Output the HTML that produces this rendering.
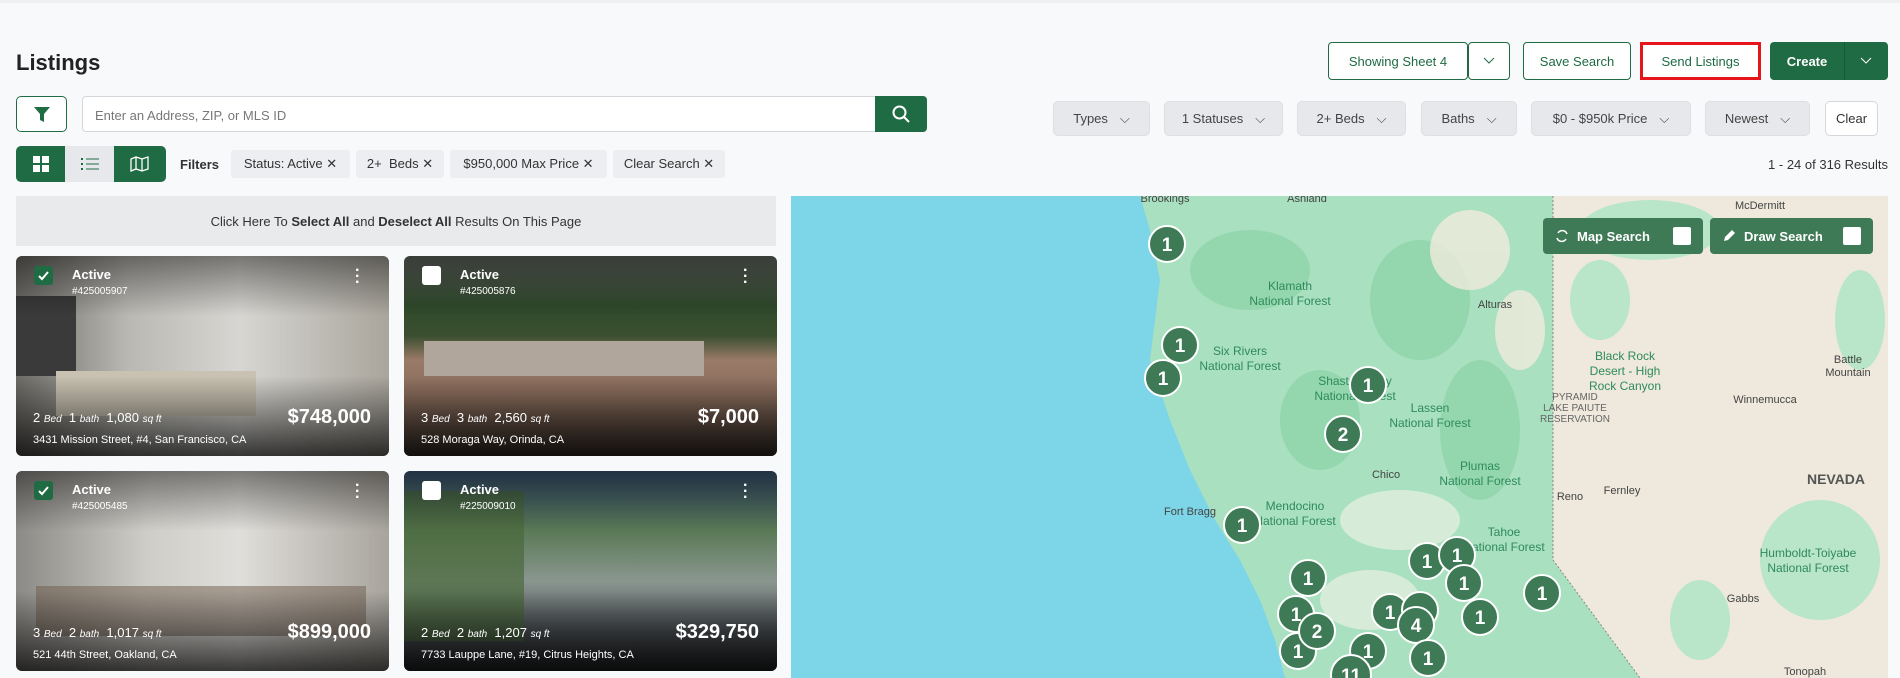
<!DOCTYPE html>
<html><head><meta charset="utf-8"><style>
*{box-sizing:border-box;margin:0;padding:0}
body{width:1900px;height:678px;overflow:hidden;background:#f8f9fb;font-family:"Liberation Sans",sans-serif;position:relative;color:#222}
.a{position:absolute}
.btn{position:absolute;border:1px solid #1f6b43;border-radius:4px;background:#fff;color:#1f6b43;font-size:13px;display:flex;align-items:center;justify-content:center;font-weight:bold}
.pill{position:absolute;top:101px;height:35px;background:#e6e8eb;border-radius:5px;font-size:13px;color:#444;display:flex;align-items:center;justify-content:center;gap:12px;border:1px solid #dde0e3}
.chip{position:absolute;top:150px;height:28px;background:#eceef1;border-radius:3px;font-size:13px;color:#333;display:flex;align-items:center;justify-content:center}
.card{position:absolute;width:373px;height:200px;border-radius:6px;overflow:hidden;color:#fff}
.card .sh{position:absolute;inset:0;background:linear-gradient(rgba(0,0,0,.45),rgba(0,0,0,0) 30%,rgba(0,0,0,0) 60%,rgba(0,0,0,.75))}
.card .st{position:absolute;left:56px;top:11px;font-size:13px;font-weight:bold}
.card .id{position:absolute;left:56px;top:30px;font-size:10px}
.card .cb{position:absolute;left:18px;top:10px;width:19px;height:19px;border-radius:3px;background:#fff}
.card .cb.on{background:#1f6b43}
.card .dots{position:absolute;right:30px;top:12px;font-size:16px;font-weight:bold;line-height:6px;width:4px}
.card .info{position:absolute;left:17px;top:154px;font-size:13px}
.card .info i{font-size:10px}
.card .addr{position:absolute;left:17px;top:178px;font-size:11px}
.card .pr{position:absolute;right:18px;top:150px;font-size:20px;font-weight:bold}
.mk{fill:#3f7a57;stroke:#fff;stroke-width:2}
.mt{fill:#fff;font-size:19px;font-family:"Liberation Sans";text-anchor:middle;font-weight:bold}
.ml{fill:#2e8a5b;font-size:12px;font-family:"Liberation Sans";text-anchor:middle}
</style></head><body>
<div class="a" style="left:0;top:0;width:1900px;height:3px;background:#eef0f2"></div>
<div class="a" style="left:16px;top:50px;font-size:22px;font-weight:bold;color:#222">Listings</div>

<div class="btn" style="left:1328px;top:42px;width:140px;height:38px;font-weight:normal">Showing Sheet 4</div>
<div class="btn" style="left:1468px;top:42px;width:42px;height:38px;font-weight:normal"><svg width="12" height="8"><path d="M1 1l5 5 5-5" stroke="#1f6b43" fill="none"/></svg></div>
<div class="btn" style="left:1523px;top:42px;width:108px;height:38px;font-weight:normal">Save Search</div>
<div class="a" style="left:1640px;top:42px;width:121px;height:38px;border:3px solid #e8141c;background:#fff;color:#1f6b43;font-size:13px;display:flex;align-items:center;justify-content:center">Send Listings</div>
<div class="a" style="left:1770px;top:42px;width:118px;height:38px;background:#1f6b43;border-radius:4px;color:#fff;font-size:13px;font-weight:bold;display:flex;align-items:center"><span style="width:74px;text-align:center">Create</span><span style="width:1px;height:38px;background:#185a38"></span><svg style="margin-left:15px" width="12" height="8"><path d="M1 1l5 5 5-5" stroke="#fff" fill="none"/></svg></div>

<div class="btn" style="left:16px;top:96px;width:51px;height:36px;border-radius:5px"><svg width="18" height="18" viewBox="0 0 18 18"><path d="M1 2h16l-6 7v8l-4-2V9z" fill="#1f6b43"/></svg></div>
<div class="a" style="left:82px;top:96px;width:794px;height:36px;border:1px solid #d4d7db;border-radius:4px 0 0 4px;background:#fff;font-size:13px;color:#777;padding:11px 12px">Enter an Address, ZIP, or MLS ID</div>
<div class="a" style="left:875px;top:96px;width:52px;height:36px;background:#1f6b43;border-radius:0 4px 4px 0;display:flex;align-items:center;justify-content:center"><svg width="18" height="18"><circle cx="7.5" cy="7.5" r="6" stroke="#fff" stroke-width="2" fill="none"/><path d="M12 12l5 5" stroke="#fff" stroke-width="2"/></svg></div>

<div class="pill" style="left:1053px;width:97px">Types <span>⌵</span></div>
<div class="pill" style="left:1164px;width:119px">1 Statuses <span>⌵</span></div>
<div class="pill" style="left:1297px;width:109px">2+ Beds <span>⌵</span></div>
<div class="pill" style="left:1421px;width:96px">Baths <span>⌵</span></div>
<div class="pill" style="left:1531px;width:160px">$0 - $950k Price <span>⌵</span></div>
<div class="pill" style="left:1705px;width:105px">Newest <span>⌵</span></div>
<div class="a" style="left:1825px;top:101px;width:53px;height:35px;border:1px solid #d4d7db;border-radius:5px;background:#fff;font-size:13px;display:flex;align-items:center;justify-content:center;color:#333">Clear</div>

<div class="a" style="left:16px;top:146px;width:150px;height:36px;border-radius:5px;overflow:hidden;display:flex">
<div style="width:49px;background:#1f6b43;display:flex;align-items:center;justify-content:center"><svg width="16" height="16"><rect x="0" y="0" width="7" height="7" fill="#fff"/><rect x="9" y="0" width="7" height="7" fill="#fff"/><rect x="0" y="9" width="7" height="7" fill="#fff"/><rect x="9" y="9" width="7" height="7" fill="#fff"/></svg></div>
<div style="width:49px;background:#e6e8eb;display:flex;align-items:center;justify-content:center"><svg width="18" height="14"><g fill="#1f6b43"><rect x="0" y="1" width="2" height="2"/><rect x="0" y="6" width="2" height="2"/><rect x="0" y="11" width="2" height="2"/><rect x="5" y="1.5" width="13" height="1"/><rect x="5" y="6.5" width="13" height="1"/><rect x="5" y="11.5" width="13" height="1"/></g></svg></div>
<div style="width:52px;background:#1f6b43;display:flex;align-items:center;justify-content:center"><svg width="20" height="16"><path d="M1 3l5-2 6 2 6-2v12l-6 2-6-2-5 2z M6 1v12 M12 3v12" stroke="#fff" fill="none" stroke-width="1.3"/></svg></div>
</div>
<div class="a" style="left:180px;top:157px;font-size:13px;font-weight:bold;color:#333">Filters</div>
<div class="chip" style="left:231px;width:119px">Status: Active&nbsp;✕</div>
<div class="chip" style="left:356px;width:88px">2+&nbsp; Beds&nbsp;✕</div>
<div class="chip" style="left:450px;width:157px">$950,000 Max Price&nbsp;✕</div>
<div class="chip" style="left:613px;width:112px">Clear Search&nbsp;✕</div>
<div class="a" style="right:12px;top:157px;font-size:13px;color:#333">1 - 24 of 316 Results</div>

<div class="a" style="left:16px;top:196px;width:760px;height:50px;background:#e8eaec;font-size:13px;color:#333;display:flex;align-items:center;justify-content:center">Click Here To&nbsp;<b>Select All</b>&nbsp;and&nbsp;<b>Deselect All</b>&nbsp;Results On This Page</div>

<div class="card" style="left:16px;top:256px;background:linear-gradient(90deg,#6d6b66,#b9b8b3 30%,#d7d6d2 60%,#a9a59c);">
<div class="a" style="left:0;top:40px;width:60px;height:80px;background:#3a3a3a"></div>
<div class="a" style="left:40px;top:115px;width:200px;height:45px;background:#c9c2b2"></div>
<div class="sh"></div><div class="cb on"><svg width="19" height="19"><path d="M5 10l3 3 6-7" stroke="#fff" stroke-width="2" fill="none"/></svg></div><div class="st">Active</div><div class="id">#425005907</div><div class="dots">·<br>·<br>·</div>
<div class="info">2 <i>Bed</i>&nbsp; 1 <i>bath</i>&nbsp; 1,080 <i>sq ft</i></div><div class="addr">3431 Mission Street, #4, San Francisco, CA</div><div class="pr">$748,000</div></div>

<div class="card" style="left:404px;top:256px;background:linear-gradient(#6a6f6a,#2f4a2a 25%,#3b4f30 40%,#9a7a68 52%,#8a6d5c 70%,#4a3e36);">
<div class="a" style="left:20px;top:85px;width:280px;height:35px;background:#b0a69c"></div>
<div class="sh"></div><div class="cb"></div><div class="st">Active</div><div class="id">#425005876</div><div class="dots">·<br>·<br>·</div>
<div class="info">3 <i>Bed</i>&nbsp; 3 <i>bath</i>&nbsp; 2,560 <i>sq ft</i></div><div class="addr">528 Moraga Way, Orinda, CA</div><div class="pr">$7,000</div></div>

<div class="card" style="left:16px;top:471px;background:linear-gradient(90deg,#8c8a86,#cfcdc8 35%,#e0deda 60%,#a8a49d);">
<div class="a" style="left:20px;top:115px;width:330px;height:50px;background:#6b5a4a;opacity:.5"></div>
<div class="sh"></div><div class="cb on"><svg width="19" height="19"><path d="M5 10l3 3 6-7" stroke="#fff" stroke-width="2" fill="none"/></svg></div><div class="st">Active</div><div class="id">#425005485</div><div class="dots">·<br>·<br>·</div>
<div class="info">3 <i>Bed</i>&nbsp; 2 <i>bath</i>&nbsp; 1,017 <i>sq ft</i></div><div class="addr">521 44th Street, Oakland, CA</div><div class="pr">$899,000</div></div>

<div class="card" style="left:404px;top:471px;background:linear-gradient(#3d5a78,#5a7a55 30%,#8a9690 55%,#4e5358 80%,#2c2e30);">
<div class="a" style="left:0;top:20px;width:120px;height:150px;background:#4a6a3c;opacity:.7"></div>
<div class="sh"></div><div class="cb"></div><div class="st">Active</div><div class="id">#225009010</div><div class="dots">·<br>·<br>·</div>
<div class="info">2 <i>Bed</i>&nbsp; 2 <i>bath</i>&nbsp; 1,207 <i>sq ft</i></div><div class="addr">7733 Lauppe Lane, #19, Citrus Heights, CA</div><div class="pr">$329,750</div></div>

<svg class="a" style="left:791px;top:196px" width="1097" height="482" viewBox="791 196 1097 482">
<rect x="791" y="196" width="1097" height="482" fill="#7dd5e8"/>
<path d="M1140 196 L1150 230 L1160 280 L1150 360 L1170 420 L1190 470 L1215 520 L1240 560 L1260 600 L1275 640 L1285 678 L1888 678 L1888 196Z" fill="#a9e0c0"/>
<path d="M1553 196 L1553 560 L1640 678 L1888 678 L1888 196Z" fill="#eee9dc"/>
<g fill="#b9e6c8"><ellipse cx="1650" cy="230" rx="70" ry="30"/><ellipse cx="1600" cy="300" rx="30" ry="40"/><ellipse cx="1860" cy="320" rx="25" ry="50"/><ellipse cx="1820" cy="560" rx="60" ry="60"/><ellipse cx="1700" cy="620" rx="30" ry="40"/></g>
<g fill="#8fd4aa" opacity=".8"><ellipse cx="1250" cy="270" rx="60" ry="40"/><ellipse cx="1420" cy="300" rx="50" ry="60"/><ellipse cx="1480" cy="430" rx="40" ry="70"/><ellipse cx="1320" cy="420" rx="40" ry="50"/></g>
<g fill="#f0ebdc" opacity=".8"><ellipse cx="1470" cy="250" rx="40" ry="40"/><ellipse cx="1520" cy="330" rx="25" ry="40"/></g>
<g fill="#d7ecd8"><ellipse cx="1400" cy="520" rx="60" ry="30"/><ellipse cx="1370" cy="600" rx="50" ry="30"/></g>
<path d="M1553 196 V560 L1640 678" stroke="#888" stroke-dasharray="2 2" fill="none"/>
<text class="ml" x="1290" y="290">Klamath</text><text class="ml" x="1290" y="305">National Forest</text>
<text class="ml" x="1240" y="355">Six Rivers</text><text class="ml" x="1240" y="370">National Forest</text>
<text class="ml" x="1355" y="385">Shasta-Trinity</text><text class="ml" x="1355" y="400">National Forest</text>
<text class="ml" x="1430" y="412">Lassen</text><text class="ml" x="1430" y="427">National Forest</text>
<text class="ml" x="1480" y="470">Plumas</text><text class="ml" x="1480" y="485">National Forest</text>
<text class="ml" x="1295" y="510">Mendocino</text><text class="ml" x="1295" y="525">National Forest</text>
<text class="ml" x="1504" y="536">Tahoe</text><text class="ml" x="1504" y="551">National Forest</text>
<text class="ml" x="1625" y="360">Black Rock</text><text class="ml" x="1625" y="375">Desert - High</text>
<text class="ml" x="1625" y="390">Rock Canyon</text>
<text class="ml" x="1808" y="557">Humboldt-Toiyabe</text><text class="ml" x="1808" y="572">National Forest</text>
<g font-family="Liberation Sans" font-size="11" fill="#444" text-anchor="middle"><text x="1165" y="202">Brookings</text><text x="1307" y="202">Ashland</text><text x="1760" y="209">McDermitt</text><text x="1495" y="308">Alturas</text><text x="1765" y="403">Winnemucca</text><text x="1848" y="363">Battle</text><text x="1848" y="376">Mountain</text><text x="1570" y="500">Reno</text><text x="1622" y="494">Fernley</text><text x="1386" y="478">Chico</text><text x="1190" y="515">Fort Bragg</text><text x="1743" y="602">Gabbs</text><text x="1805" y="675">Tonopah</text><text x="1836" y="484" font-size="14" font-weight="bold" fill="#555">NEVADA</text><text x="1575" y="400" font-size="10" fill="#666">PYRAMID</text><text x="1575" y="411" font-size="10" fill="#666">LAKE PAIUTE</text><text x="1575" y="422" font-size="10" fill="#666">RESERVATION</text></g>
<g>
<circle class="mk" cx="1167" cy="244" r="18"/><text class="mt" x="1167" y="251">1</text>
<circle class="mk" cx="1180" cy="345" r="18"/><text class="mt" x="1180" y="352">1</text>
<circle class="mk" cx="1163" cy="378" r="18"/><text class="mt" x="1163" y="385">1</text>
<circle class="mk" cx="1368" cy="385" r="18"/><text class="mt" x="1368" y="392">1</text>
<circle class="mk" cx="1343" cy="434" r="18"/><text class="mt" x="1343" y="441">2</text>
<circle class="mk" cx="1242" cy="525" r="18"/><text class="mt" x="1242" y="532">1</text>
<circle class="mk" cx="1308" cy="578" r="18"/><text class="mt" x="1308" y="585">1</text>
<circle class="mk" cx="1427" cy="561" r="18"/><text class="mt" x="1427" y="568">1</text>
<circle class="mk" cx="1457" cy="555" r="18"/><text class="mt" x="1457" y="562">1</text>
<circle class="mk" cx="1464" cy="583" r="18"/><text class="mt" x="1464" y="590">1</text>
<circle class="mk" cx="1542" cy="593" r="18"/><text class="mt" x="1542" y="600">1</text>
<circle class="mk" cx="1480" cy="617" r="18"/><text class="mt" x="1480" y="624">1</text>
<circle class="mk" cx="1390" cy="612" r="18"/><text class="mt" x="1390" y="619">1</text>
<circle class="mk" cx="1420" cy="610" r="18"/>
<circle class="mk" cx="1416" cy="625" r="18"/><text class="mt" x="1416" y="632">4</text>
<circle class="mk" cx="1296" cy="614" r="18"/><text class="mt" x="1296" y="621">1</text>
<circle class="mk" cx="1298" cy="651" r="18"/><text class="mt" x="1298" y="658">1</text>
<circle class="mk" cx="1368" cy="651" r="18"/><text class="mt" x="1368" y="658">1</text>
<circle class="mk" cx="1428" cy="658" r="18"/><text class="mt" x="1428" y="665">1</text>
<circle class="mk" cx="1351" cy="675" r="20"/><text class="mt" x="1351" y="682">11</text>
<circle class="mk" cx="1317" cy="631" r="18"/><text class="mt" x="1317" y="638">2</text>
</g>
</svg>
<div class="a" style="left:1543px;top:218px;width:160px;height:36px;background:#3f7a57;border-radius:4px;color:#fff;font-size:13px;font-weight:bold;display:flex;align-items:center;padding-left:12px;gap:8px"><svg width="14" height="14"><path d="M12 5a5 5 0 0 0-9-1M2 9a5 5 0 0 0 9 1" stroke="#fff" fill="none" stroke-width="1.5"/></svg>Map Search<span style="margin-left:auto;margin-right:12px;width:18px;height:18px;background:#fff;border-radius:2px"></span></div>
<div class="a" style="left:1710px;top:218px;width:163px;height:36px;background:#3f7a57;border-radius:4px;color:#fff;font-size:13px;font-weight:bold;display:flex;align-items:center;padding-left:12px;gap:8px"><svg width="14" height="14"><path d="M2 12l1-4 7-7 3 3-7 7z" fill="#fff"/></svg>Draw Search<span style="margin-left:auto;margin-right:12px;width:18px;height:18px;background:#fff;border-radius:2px"></span></div>
</body></html>
